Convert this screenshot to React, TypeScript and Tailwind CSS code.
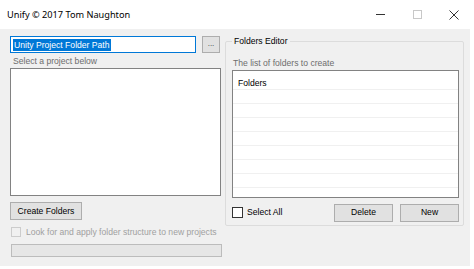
import React from 'react';

// Unify folder tool, a WinForms-style window
const rows = ['Folders', '', '', '', '', '', '', ''];

const WinButton: React.FC<{ label: string; className?: string }> = ({ label, className }) => (
  <button
    className={`h-[18px] bg-[#e1e1e1] border border-[#adadad] text-[8.6px] leading-none text-black flex items-center justify-center ${className ?? ''}`}
  >
    {label}
  </button>
);

const App: React.FC = () => {
  return (
    <div
      className="w-[474px] h-[269px] bg-white overflow-hidden"
      style={{ fontFamily: '"Liberation Sans", Arial, sans-serif' }}
    >
      {/* title bar */}
      <div className="h-[29px] flex items-center">
        <div className="pl-[7px] flex-1 text-[9.2px] text-black" style={{ fontFamily: '"Noto Sans", sans-serif' }}>
          Unify © 2017 Tom Naughton
        </div>
        <div className="flex pr-[1.5px] text-[#222]">
          <div className="w-[37px] h-[29px] flex items-center justify-center">
            <div className="w-[9px] h-px bg-[#333]" />
          </div>
          <div className="w-[37px] h-[29px] flex items-center justify-center">
            <div className="w-[9px] h-[9px] border border-[#c8c8c8]" />
          </div>
          <div className="w-[37px] h-[29px] flex items-center justify-center">
            <svg width="10" height="10" viewBox="0 0 10 10">
              <path d="M0.5 0.5 L9.5 9.5 M9.5 0.5 L0.5 9.5" stroke="#333" strokeWidth="1" />
            </svg>
          </div>
        </div>
      </div>

      {/* client area */}
      <div className="w-[470px] h-[237px] bg-[#f0f0f0] flex pl-[10px] pt-[5.5px] text-[8.6px] text-black">
        {/* left column */}
        <div className="w-[212px] flex flex-col pt-[1.5px]">
          <div className="flex items-center gap-[6px]">
            <div className="w-[186px] h-[17px] bg-white border border-[#0078d7] flex items-center pl-[2px]">
              <span className="bg-[#0078d7] text-white leading-[12px] px-px">Unity Project Folder Path</span>
            </div>
            <button className="w-[18px] h-[17px] bg-[#e1e1e1] border border-[#adadad] text-[8px] leading-none text-[#333] flex items-end justify-center pb-[4px]">
              ...
            </button>
          </div>
          <div className="h-[13px] leading-[13px] mt-[2px] pl-[3px] text-[#6d6d6d]">Select a project below</div>
          <div className="w-[211px] h-[128px] bg-white border border-[#828282]" />
          <WinButton label="Create Folders" className="w-[72px] mt-[6px]" />
          <div className="flex items-center mt-[6px] h-[12px]">
            <div className="w-[10px] h-[10px] ml-px border border-[#cccccc] bg-[#f0f0f0]" />
            <span className="ml-[5px] text-[#a0a0a0]">Look for and apply folder structure to new projects</span>
          </div>
          <div className="mt-[6px] ml-px w-[211px] h-[13px] bg-[#e6e6e6] border border-[#bcbcbc]" />
        </div>

        {/* right group box */}
        <fieldset className="ml-[3px] w-[239px] h-[191.5px] border border-[#dcdcdc] rounded-[2px] pl-[6px] pr-[4px] pb-[3px]">
          <legend className="px-[2px] leading-[13px]">Folders Editor</legend>
          <div className="h-[13px] leading-[13px] mt-[9px] pl-[1px] text-[#6d6d6d]">The list of folders to create</div>
          <div className="w-[227px] h-[128px] bg-white border border-[#828282] pt-[5px] overflow-hidden">
            {rows.map((r, i) => (
              <div key={i} className="h-[14px] leading-[14px] pl-[5px] border-b border-[#f0f0f0]">
                {r}
              </div>
            ))}
          </div>
          <div className="flex items-center mt-[6px]">
            <div className="w-[11px] h-[11px] border border-[#333] bg-white" />
            <span className="ml-[4px] flex-1">Select All</span>
            <WinButton label="Delete" className="w-[59px]" />
            <WinButton label="New" className="w-[59px] ml-[7px]" />
          </div>
        </fieldset>
      </div>
    </div>
  );
};

export default App;
